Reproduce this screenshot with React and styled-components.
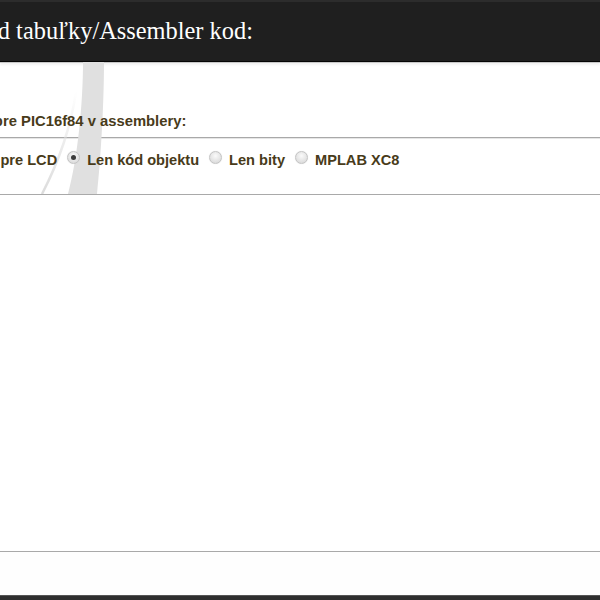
import React, {useState} from 'react'
import styled, {createGlobalStyle} from "styled-components"

const GlobalStyle=createGlobalStyle`
html,body{
  margin:0;
  padding:0;
  background:#fff;
  overflow:hidden;
}
`

const Page=styled.div`
width:600px;
height:600px;
display:flex;
flex-direction:column;
overflow:hidden;
`

const Header=styled.header`
height:59px;
flex-shrink:0;
background-color:#1f1f1f;
border-top:2px solid #2c2c2c;
border-bottom:1px solid #050505;
box-shadow:0 1px 0 #c8c8c8, 0 3px 2px #f2f2f2;
display:flex;
align-items:center;
`

const Title=styled.h1`
margin:0 0 0 -32px;
padding-bottom:2px;
font-family:"Liberation Serif","Times New Roman",serif;
font-weight:normal;
font-size:24.4px;
color:#fff;
white-space:nowrap;
`

const Main=styled.main`
position:relative;
flex:1;
display:flex;
flex-direction:column;
`

const Swoosh=styled.svg`
position:absolute;
left:0;
top:0;
width:140px;
height:132px;
z-index:0;
pointer-events:none;
`

const Heading=styled.h3`
position:relative;
z-index:1;
margin:0 0 0 -39px;
padding:51px 0 8px;
line-height:16px;
font-family:"Liberation Sans",Arial,sans-serif;
font-weight:bold;
font-size:14.8px;
color:#483b1a;
white-space:nowrap;
`

const Rule=styled.div`
height:1px;
flex-shrink:0;
background-color:#a9a9a9;
box-shadow:0 1px 0 #e6e6e6;
`

const Options=styled.div`
position:relative;
z-index:1;
height:56px;
display:flex;
align-items:flex-start;
padding-top:14px;
box-sizing:border-box;
margin-left:-32px;
white-space:nowrap;
`

const Option=styled.label`
display:flex;
align-items:center;
margin-right:5px;
line-height:17px;
font-family:"Liberation Sans",Arial,sans-serif;
font-weight:bold;
font-size:14.6px;
color:#483b1a;
`

const Radio=styled.span`
width:11px;
height:11px;
border-radius:50%;
margin:0 7px 0 5px;
position:relative;
top:-3px;
border:1px solid #c4c4c4;
background:radial-gradient(circle at 50% 35%,#fafafa,#d4d4d4);
box-shadow:0 0 1px #ddd;
&::after{
  content:"";
  display:${props=>props.checked?"block":"none"};
  position:absolute;
  left:3px;
  top:3px;
  width:5px;
  height:5px;
  border-radius:50%;
  background:#3c3c3c;
}
`

const Output=styled.div`
height:356px;
flex-shrink:0;
background:#fff;
`

const Bottom=styled.div`
flex:1;
background:#fefefe;
`

const Footer=styled.footer`
height:4px;
flex-shrink:0;
background-color:#2f2f2f;
border-top:1px solid #555;
`

const options=[
  {id:"lcd",label:"Kód pre LCD"},
  {id:"obj",label:"Len kód objektu"},
  {id:"bity",label:"Len bity"},
  {id:"xc8",label:"MPLAB XC8"},
]

const App = () => {
    const[selected,setSelected]=useState("obj");
    return (
        <Page>
            <GlobalStyle/>
            <Header>
                <Title>Kód tabuľky/Assembler kod:</Title>
            </Header>
            <Main>
                <Swoosh viewBox="0 0 140 132">
                    <defs>
                        <linearGradient id="fade" x1="0" y1="0" x2="0" y2="1">
                            <stop offset="0" stopColor="#e0e0e0" stopOpacity="0"/>
                            <stop offset="0.5" stopColor="#e0e0e0" stopOpacity="0.6"/>
                            <stop offset="1" stopColor="#dcdcdc" stopOpacity="1"/>
                        </linearGradient>
                    </defs>
                    <path d="M83 0 C83 40 78 95 68 132 L97 132 C101 95 104 40 104 0 Z" fill="#e0e0e0"/>
                    <path d="M76 30 C70 70 56 105 42 132" stroke="url(#fade)" strokeWidth="2.5" fill="none"/>
                </Swoosh>
                <Heading>Kód pre PIC16f84 v assemblery:</Heading>
                <Rule/>
                <Options>
                    {options.map(o=>(
                        <Option key={o.id} onClick={()=>setSelected(o.id)}>
                            {o.id!=="lcd"&&<Radio checked={selected===o.id}/>}
                            {o.label}
                        </Option>
                    ))}
                </Options>
                <Rule/>
                <Output/>
                <Rule/>
                <Bottom/>
            </Main>
            <Footer/>
        </Page>
    )
}

export default App
